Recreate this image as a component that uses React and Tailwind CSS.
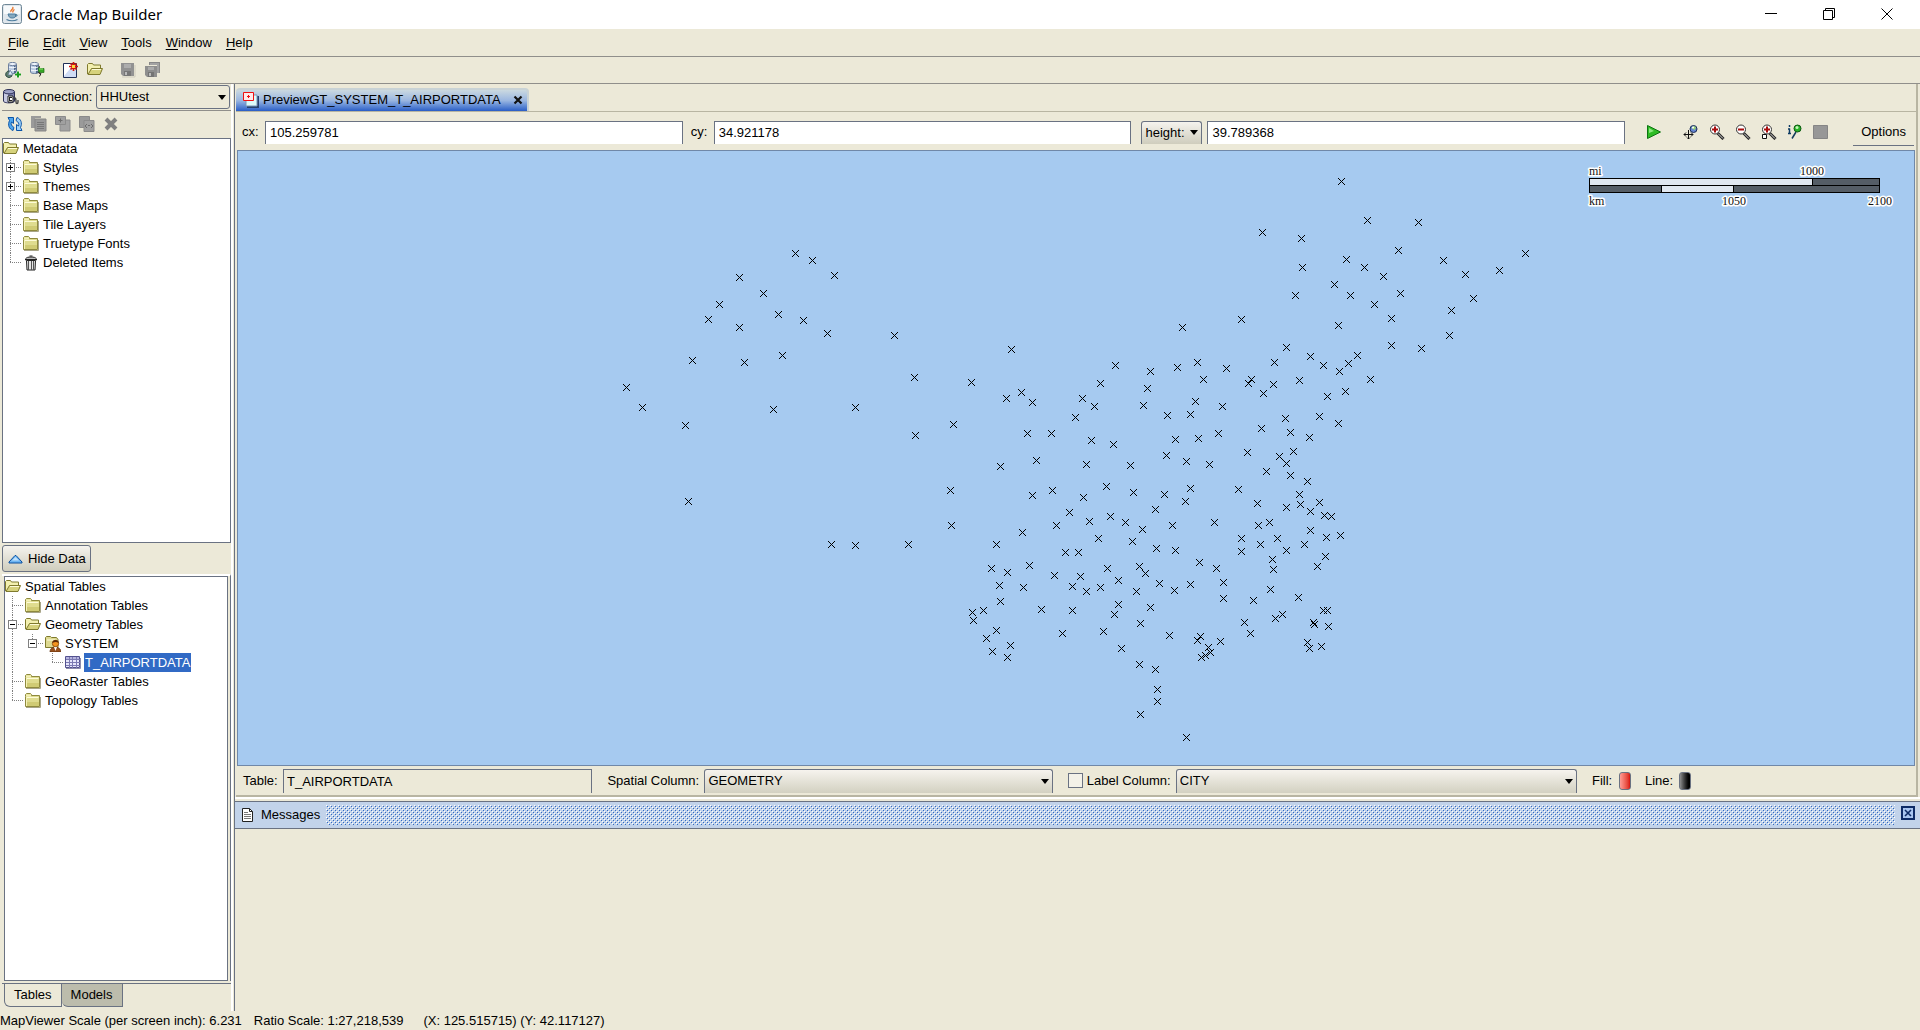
import { useState } from "react";

// airport locations, in window pixels
const AIRPORTS = [
  [795,253],[812,260],[834,275],[739,277],[763,293],[719,304],[708,319],[739,327],[778,314],[803,320],
  [827,333],[894,335],[692,360],[744,362],[782,355],[914,377],[971,382],[626,387],[642,407],[773,409],
  [855,407],[685,425],[915,435],[953,424],[950,490],[688,501],[951,525],[831,544],[855,545],[908,544],
  [1011,349],[1006,398],[1021,392],[1032,402],[1027,433],[1051,433],[1000,466],[1036,460],[1032,495],
  [1052,490],[1022,532],[996,544],[1115,365],[1100,383],[1082,398],[1094,406],[1075,417],
  [1091,440],[1113,444],[1086,464],[1130,465],[1106,486],[1083,497],[1069,512],[1056,525],[1089,521],
  [1110,516],[1125,522],[1098,538],[1065,552],[1078,552],[1029,565],[1133,492],[1150,371],[1147,388],
  [1143,405],[1177,367],[1197,362],[1203,379],[1195,401],[1190,414],[1167,415],[1175,439],[1198,438],
  [1166,455],[1186,461],[1209,464],[1218,433],[1222,406],[1226,368],[1248,383],[1251,379],[1263,393],
  [1273,384],[1274,362],[1286,347],[1299,380],[1310,356],[1323,365],[1339,371],[1348,363],[1357,355],
  [1391,345],[1370,379],[1345,391],[1327,396],[1319,416],[1338,423],[1309,437],[1285,418],
  [1290,432],[1261,428],[1247,452],[1279,456],[1293,451],[1286,463],[1290,475],[1266,471],[1307,481],
  [1299,494],[1300,504],[1286,507],[1310,511],[1319,502],[1324,515],[1331,516],[1310,530],[1326,537],
  [1340,535],[1304,544],[1325,556],[1317,566],[1238,489],[1257,503],[1258,525],[1269,522],[1277,538],
  [1286,550],[1260,544],[1241,538],[1241,551],[1272,559],[1273,569],[1214,522],[1190,488],[1185,501],
  [1164,494],[1155,509],[1142,529],[1132,541],[1172,525],[1156,548],[1175,550],[1199,562],[1216,568],
  [991,568],[1007,572],[999,585],[1023,587],[1000,601],[972,612],[983,610],[973,620],[986,638],[996,630],
  [992,651],[1010,645],[1007,657],[1041,609],[1054,575],[1072,586],[1080,576],[1086,591],[1072,610],
  [1062,633],[1100,587],[1107,568],[1118,580],[1118,604],[1114,614],[1103,631],[1121,648],[1139,566],
  [1145,573],[1136,591],[1150,607],[1140,623],[1159,583],[1174,590],[1190,584],[1223,582],[1223,598],
  [1169,635],[1139,664],[1155,669],[1157,689],[1157,701],[1140,714],[1186,737],[1200,636],[1197,640],
  [1208,647],[1210,652],[1205,655],[1201,657],[1220,641],[1244,622],[1250,633],[1253,600],[1270,589],
  [1275,618],[1282,614],[1298,597],[1313,622],[1314,624],[1323,610],[1327,610],[1328,626],[1307,642],
  [1309,648],[1321,646],[1341,181],[1367,220],[1418,222],[1262,232],[1301,238],[1398,250],
  [1346,259],[1364,267],[1302,267],[1383,276],[1334,284],[1350,295],[1295,295],[1400,293],[1443,260],
  [1465,274],[1499,270],[1525,253],[1473,298],[1451,310],[1374,304],[1391,318],[1338,325],[1241,319],
  [1182,327],[1449,335],[1421,348],
];

function Icon({ children, size = 16, className = "" }) {
  return (
    <svg width={size} height={size} viewBox={`0 0 ${size} ${size}`} className={`shrink-0 ${className}`} aria-hidden="true">
      {children}
    </svg>
  );
}

const JavaIcon = () => (
  <Icon size={20}>
    <rect x=".5" y=".5" width="19" height="19" rx="2" fill="#dfe6ec" stroke="#6f8797" />
    <rect x="2" y="2" width="16" height="8" fill="#f6f9fb" />
    <path d="M10.500 3c2 2-3 3-1.500 5M12.500 5.500c-2 1-2 1.700-1.500 3" stroke="#e8762d" strokeWidth="1.300" fill="none" />
    <path d="M6 10h7.500v2.500c-1 2-5.500 2-6.500 0zM13.500 10.500c2.500-.5 2 2-.5 2.200" stroke="#4a7a9c" fill="#86a9c0" />
    <path d="M4.500 15.500c3 1.500 8 1.500 11 0" stroke="#4a7a9c" strokeWidth="1.300" fill="none" />
  </Icon>
);

const Cylinder = ({ x = 0, y = 0 }) => (
  <g transform={`translate(${x} ${y})`}>
    <path d="M.5 2v8c0 2 8 2 8 0V2" fill="#b9cbe2" stroke="#6d7f9c" />
    <path d="M6 3v8.500c2-.3 2.500-.8 2.500-1.500V2z" fill="#51698c" />
    <ellipse cx="4.500" cy="2" rx="4" ry="1.600" fill="#eef4fb" stroke="#6d7f9c" />
    <path d="M1 5c1.500 1 5 1 7 0M1 8c1.500 1 5 1 7 0" stroke="#fff" fill="none" />
  </g>
);

const AddDbIcon = () => (
  <Icon>
    <Cylinder x={3} />
    <path d="M1 14c-1-3 1-5 3-5l3 5-3 2z" fill="#5f7f6b" stroke="#2d4a46" />
    <path d="M5 8l-2 5h5z" fill="#dbe8f5" stroke="#5a728e" strokeWidth=".7" />
    <path d="M13 9.500v6M10 12.500h6" stroke="#fff" strokeWidth="3" />
    <path d="M13 9.500v6M10 12.500h6" stroke="#1c9a1c" strokeWidth="2" />
  </Icon>
);

const DbFlagIcon = () => (
  <Icon>
    <Cylinder x={0} />
    <path d="M9.500 4v8" stroke="#6d5c48" />
    <path d="M8 10.500l3 1-1.500 3" stroke="#222" fill="none" />
    <path d="M8.500 5.500l2 1h3.500v4h-3.500l-2-1z" fill="#37a826" stroke="#1d6d16" strokeWidth=".7" />
    <path d="M9 7h4" stroke="#8be070" />
  </Icon>
);

const NewDocIcon = () => (
  <Icon>
    <path d="M.5 1.500h13v14H.5z" fill="#cfdcf4" stroke="#1f2f57" />
    <path d="M1 2h10L1 14z" fill="#fff" />
    <path d="M10.500 0v9M6 4.500h9M7.500 1.500l6 6M13.500 1.500l-6 6" stroke="#d4150c" strokeWidth="1.700" />
    <rect x="9" y="3" width="3" height="3" fill="#ffd83a" />
  </Icon>
);

const FolderIcon = () => (
  <Icon>
    <path d="M1 14.500h14.500V4" stroke="#a8a588" fill="none" />
    <path d="M.5 3.500v-2l1-1h4l1 1v1h8v11H.5z" fill="#dfdc8f" stroke="#8f8a3e" />
    <path d="M1.500 4.500h12" stroke="#fdfbd8" />
    <path d="M1.500 4v9" stroke="#f5f2b8" />
    <path d="M1 1.500h5v2H1z" fill="#f3f0b4" />
    <path d="M2 9h12v4H2z" fill="#d0cb74" />
  </Icon>
);

const OpenFolderIcon = () => (
  <Icon>
    <path d="M.5 12V2.500l1-1h4l1 1.500h7v3" fill="#f3f0b0" stroke="#7f7a2e" />
    <path d="M1 12.500l3.500-6h11l-2.500 6z" fill="#d6d27c" stroke="#7f7a2e" />
    <path d="M5 7.500h9" stroke="#fdfbd8" />
  </Icon>
);

const SaveIcon = () => (
  <Icon>
    <path d="M2 15h13V3" stroke="#cfccbd" fill="none" />
    <path d="M1 1h13v13H3l-2-2z" fill="#929292" />
    <path d="M4 2h7v4H4z" fill="#adadad" />
    <path d="M4 9h7v5H4z" fill="#777" />
    <path d="M5 10h2v3H5z" fill="#bbb" />
  </Icon>
);

const SaveAllIcon = () => (
  <Icon>
    <path d="M4 0h11v11h-2V3H4z" fill="#888" />
    <path d="M5 1h9v10h-2V3H5z" fill="#a3a3a3" />
    <path d="M0 4h12v11H2l-2-2z" fill="#8e8e8e" />
    <path d="M3 5h6v3H3z" fill="#ababab" />
    <path d="M3 10h6v5H3z" fill="#747474" />
    <path d="M4 11h2v3H4z" fill="#bbb" />
  </Icon>
);

const PlugDbIcon = () => (
  <Icon>
    <path d="M.5 3v9c0 2.500 11 2.500 11 0V3" fill="#7d81ad" stroke="#2e3157" />
    <path d="M1 3v9c1 1 2 1.300 4 1.500V4z" fill="#c8cbe3" />
    <ellipse cx="6" cy="2.700" rx="5.500" ry="2.200" fill="#9da1c6" stroke="#2e3157" />
    <path d="M5 7h5v6H5z" fill="#fff" stroke="#222" />
    <path d="M6 8.500h3M6 11.500h3M6.500 8v4" stroke="#222" />
    <path d="M10 10c3-3 3 1 3 3s2 2 2 0v-2" stroke="#444" strokeWidth="1.400" fill="none" />
  </Icon>
);

const RefreshIcon = () => (
  <Icon>
    <path d="M1 1.500h5.500v6l-2-1.500c-1 2 0 4 2.500 5.500l-1 3C2 13 .5 9 2.500 4.500z" fill="#4ea6ee" stroke="#0c55a8" />
    <path d="M15 14.500H9.500v-6l2 1.500c1-2 0-4-2.500-5.500l1-3C14 3 15.500 7 13.500 11.500z" fill="#9dd0f8" stroke="#0c55a8" />
  </Icon>
);

const CopyIcon = () => (
  <Icon>
    <path d="M0 0h10v2H4v10H0z" fill="#9a9a9a" />
    <path d="M4 3h11v12H4z" fill="#999" stroke="#858585" />
    <path d="M6 6.500h7M6 8.500h7M6 10.500h7M6 12.500h7" stroke="#777" />
  </Icon>
);

const PreviewGrayIcon = () => (
  <Icon>
    <path d="M5 4h10v11H5z" fill="#a2a2a2" stroke="#8b8b8b" />
    <path d="M.5.500h10v8H.5z" fill="#a0a0a0" stroke="#8b8b8b" />
    <path d="M5.500 2.500v4M3.500 4.500h4" stroke="#6c6c6c" />
  </Icon>
);

const XmlGrayIcon = () => (
  <Icon>
    <path d="M.5.500h10v11H.5z" fill="#9a9a9a" stroke="#8b8b8b" />
    <path d="M5 4.500h10v11H5z" fill="#a0a0a0" stroke="#8b8b8b" />
    <path d="M8 8l-2 2 2 2M12 8l2 2-2 2" stroke="#6c6c6c" fill="none" />
    <path d="M9 9.500h2" stroke="#6c6c6c" />
  </Icon>
);

const DeleteIcon = () => (
  <Icon>
    <path d="M3 3l10 10M13 3L3 13" stroke="#808080" strokeWidth="4" />
  </Icon>
);

const TrashIcon = () => (
  <Icon>
    <path d="M2 4.500h12" stroke="#222" strokeWidth="1.500" />
    <path d="M3 3.500c0-2 10-2 10 0" stroke="#222" fill="#bbb" />
    <path d="M6.500 1h3" stroke="#222" />
    <path d="M3.500 5.500h9l-.5 9.500H4z" fill="#e5e5e5" stroke="#222" />
    <path d="M5.500 6v9M8.500 6v9M10.500 6v9" stroke="#555" />
  </Icon>
);

const SchemaIcon = () => (
  <Icon>
    <path d="M.5 11.500V1.500l1-1h4l1 1h5l1.500 2v8z" fill="#ddd991" stroke="#7f7a2e" />
    <path d="M2 4h9" stroke="#fffde0" />
    <path d="M5 16c0-4 3-5 5-5s6 1 6 5z" fill="#96501d" stroke="#5b2b0a" strokeWidth=".7" />
    <path d="M9 11l1.500 4 1.500-4z" fill="#fff" />
    <circle cx="10.500" cy="7.500" r="3.200" fill="#f3941f" stroke="#7a3c07" strokeWidth=".7" />
    <path d="M7.300 7c0-4 6.400-4 6.400 0-2-1.500-4-1.500-6.400 0z" fill="#5b2b0a" />
  </Icon>
);

const TableIcon = () => (
  <Icon>
    <path d="M.5 1.500h14v11H.5z" fill="#e6e6fa" stroke="#53518f" />
    <path d="M1 2h13v2H1z" fill="#b5b3de" />
    <g shapeRendering="crispEdges">
      <path d="M.5 4.500h14M.5 7.500h14M.5 10.500h14M4.500 2v11M7.500 2v11M11.500 2v11" stroke="#7c7ab2" />
    </g>
    <path d="M1 13.500h14.500V3" stroke="#8d8cab" fill="none" />
  </Icon>
);

const UpIcon = () => (
  <Icon>
    <path d="M1 11L7 4.500h1L14 11v1H1z" fill="#6db5f3" stroke="#0b4f9e" />
    <path d="M4 9.500L7.500 6 11 9.500z" fill="#c3e2fb" />
  </Icon>
);

const PreviewIcon = () => (
  <Icon>
    <path d="M4 15h11V4" stroke="#26406c" strokeWidth="2" fill="none" />
    <path d="M3 3h11v11H3z" fill="#ddfafa" stroke="#7895b8" />
    <path d="M.5.500h10v8H.5z" fill="#ffe9ea" stroke="#f01010" />
    <path d="M5.500 3v3M4 4.500h3" stroke="#f01010" />
  </Icon>
);

const PlayIcon = () => (
  <Icon>
    <path d="M1.500 1.500L14.500 8 1.500 14.500z" fill="#2fbc25" stroke="#0d7411" />
    <path d="M3 4v5l5-2z" fill="#8ce780" />
  </Icon>
);

const PanIcon = () => (
  <Icon>
    <path d="M5.500 6v9M1 10.500h9M3 8.500l-2 2 2 2M8 8.500l2 2-2 2M4 13.500L5.500 15 7 13.500" stroke="#111" fill="none" />
    <circle cx="10.500" cy="5" r="3.500" fill="#6484d0" stroke="#1c2d57" />
    <path d="M8.500 4l2-2 2.500 1-1 3-2-1z" fill="#9bd36f" />
    <circle cx="10" cy="3.500" r="1" fill="#fff" />
  </Icon>
);

const Magnifier = ({ children }) => (
  <Icon>
    <path d="M8.500 9l6 6" stroke="#222" strokeWidth="3" />
    <path d="M9 9.500l5 5" stroke="#ddd" />
    <circle cx="6" cy="5.500" r="4.500" fill="#fff" stroke="#333" />
    {children}
  </Icon>
);

const MarqueeIcon = () => (
  <Magnifier>
    <path d="M6 2.500v6M3 5.500h6" stroke="#a80d0d" strokeWidth="2" />
    <path d="M1.500 10.500h4v4h-4z" fill="#fff" stroke="#111" />
  </Magnifier>
);

const IdentifyIcon = () => (
  <Icon>
    <path d="M2.500 1v2M2.500 4.500v5M1 5h2M1 9.500h3" stroke="#0d3b63" strokeWidth="1.500" />
    <path d="M9 8l-4 6.500" stroke="#143b5c" strokeWidth="1.500" />
    <circle cx="10.500" cy="4.500" r="3.500" fill="#27b227" stroke="#0b570f" />
    <circle cx="10" cy="3.500" r="1.500" fill="#c4f6b7" />
  </Icon>
);

const MessagesIcon = () => (
  <Icon>
    <path d="M2.500 1.500h7l3 3v10h-10z" fill="#fff" stroke="#222" />
    <path d="M9.500 1.500v3h3" stroke="#222" fill="none" />
    <path d="M4 5.500h4M4 7.500h7M4 9.500h7M4 11.500h7" stroke="#777" />
  </Icon>
);

const CloseTabIcon = () => (
  <Icon size={10}>
    <path d="M1.500 1.500l7 7M8.500 1.500l-7 7" stroke="#111" strokeWidth="2.200" />
  </Icon>
);

// 20px wide piece of the dotted tree lines
function Guide({ kind }) {
  const box = kind === "plus" || kind === "minus" || kind === "minusEnd";
  const end = kind === "end" || kind === "minusEnd";
  return (
    <svg width="20" height="19" className="shrink-0" shapeRendering="crispEdges" aria-hidden="true">
      {kind !== "blank" && <path d={end ? "M7.500 0V10" : "M7.500 0V19"} stroke="#808080" strokeDasharray="1 1" />}
      {kind !== "blank" && kind !== "line" && <path d="M7 9.500h12" stroke="#808080" strokeDasharray="1 1" />}
      {box && <rect x="3.500" y="5.500" width="8" height="8" fill="#fff" stroke="#808080" />}
      {box && <path d="M5 9.500h5" stroke="#000" />}
      {kind === "plus" && <path d="M7.500 7v5" stroke="#000" />}
    </svg>
  );
}

function TreeRow({ guides = [], icon, label, selected }) {
  return (
    <li className="flex h-[19px] items-center">
      {guides.map((kind, i) => <Guide key={i} kind={kind} />)}
      {icon}
      <span className={selected ? "ml-[3px] h-[19px] bg-[#316ac5] px-px leading-[19px] text-white" : "ml-1"}>{label}</span>
    </li>
  );
}

function Combo({ id, value, options, className, selectClass }) {
  return (
    <div className={`relative min-w-0 ${className}`}>
      <select id={id} aria-label={value} defaultValue={value} className={`h-full w-full appearance-none border-gray-500 outline-none ${selectClass}`}>
        {options.map((o) => <option key={o}>{o}</option>)}
      </select>
      <svg width="8" height="5" className="pointer-events-none absolute top-1/2 right-1 -mt-0.5" aria-hidden="true">
        <path d="M0 0h8L4 5z" />
      </svg>
    </div>
  );
}

function ToolButton({ label, children, className = "" }) {
  return <button aria-label={label} className={`shrink-0 ${className}`}>{children}</button>;
}

function TitleBar() {
  return (
    <header className="flex h-[29px] shrink-0 items-center bg-white pb-0.5 pl-0.5">
      <JavaIcon />
      <h1 className="ml-[5px] flex-1 font-['Noto_Sans',sans-serif] text-[15px] font-normal text-black">Oracle Map Builder</h1>
      <div className="flex items-center gap-[46px] pr-[27px]">
        <ToolButton label="Minimize"><Icon size={12}><path d="M0 5.500h12" stroke="#000" /></Icon></ToolButton>
        <ToolButton label="Restore"><Icon size={12}><path d="M.5 2.500h9v9h-9zM2.500 2.500v-2h9v9h-2" stroke="#000" fill="none" /></Icon></ToolButton>
        <ToolButton label="Close"><Icon size={12}><path d="M.5.500l11 11M11.500.500l-11 11" stroke="#000" /></Icon></ToolButton>
      </div>
    </header>
  );
}

function MenuBar() {
  const menus = ["File", "Edit", "View", "Tools", "Window", "Help"];
  return (
    <nav className="flex h-[28px] shrink-0 items-center gap-[14px] border-b border-[#908f8b] pl-2">
      {menus.map((m) => (
        <button key={m}><span className="underline underline-offset-2">{m[0]}</span>{m.slice(1)}</button>
      ))}
    </nav>
  );
}

function MainToolbar() {
  return (
    <div className="flex h-[27px] shrink-0 items-center border-b border-[#908f8b] pl-[5px]">
      <ToolButton label="New connection"><AddDbIcon /></ToolButton>
      <ToolButton label="Connect" className="ml-[9px]"><DbFlagIcon /></ToolButton>
      <ToolButton label="New" className="ml-[17px]"><NewDocIcon /></ToolButton>
      <ToolButton label="Open" className="ml-2"><OpenFolderIcon /></ToolButton>
      <ToolButton label="Save" className="ml-[17px]"><SaveIcon /></ToolButton>
      <ToolButton label="Save all" className="ml-[9px]"><SaveAllIcon /></ToolButton>
    </div>
  );
}

function Sidebar() {
  const [showData, setShowData] = useState(true);
  return (
    <aside className="flex w-[231px] shrink-0 flex-col pl-0.5">
      <div className="flex h-[27px] shrink-0 items-center border-b border-[#908f8b] pr-px pl-px">
        <PlugDbIcon />
        <label htmlFor="connection" className="ml-1 flex-1">Connection:</label>
        <Combo id="connection" value="HHUtest" options={["HHUtest"]} className="h-6 w-[134px]" selectClass="rounded-[3px] border pl-[3px]" />
      </div>
      <div className="flex h-[27px] shrink-0 items-center gap-2 pb-0.5 pl-[5px]">
        <ToolButton label="Refresh"><RefreshIcon /></ToolButton>
        <ToolButton label="Copy"><CopyIcon /></ToolButton>
        <ToolButton label="Preview"><PreviewGrayIcon /></ToolButton>
        <ToolButton label="View XML"><XmlGrayIcon /></ToolButton>
        <ToolButton label="Delete"><DeleteIcon /></ToolButton>
      </div>
      <ul className="min-h-0 flex-[200] overflow-hidden border border-gray-500 bg-white">
        <TreeRow icon={<OpenFolderIcon />} label="Metadata" />
        <TreeRow guides={["plus"]} icon={<FolderIcon />} label="Styles" />
        <TreeRow guides={["plus"]} icon={<FolderIcon />} label="Themes" />
        <TreeRow guides={["tee"]} icon={<FolderIcon />} label="Base Maps" />
        <TreeRow guides={["tee"]} icon={<FolderIcon />} label="Tile Layers" />
        <TreeRow guides={["tee"]} icon={<FolderIcon />} label="Truetype Fonts" />
        <TreeRow guides={["end"]} icon={<TrashIcon />} label="Deleted Items" />
      </ul>
      <div className="flex h-[31px] shrink-0 items-start pt-0.5">
        <button onClick={() => setShowData(!showData)} className="flex h-[27px] items-center gap-1 rounded-[3px] border border-gray-500 bg-linear-to-b from-[#f5f3ee] to-[#cfcdbd] pr-1 pl-[5px]">
          <UpIcon />
          <span>Hide Data</span>
        </button>
      </div>
      {showData && (
        <div className="flex min-h-0 flex-[201] flex-col border-t-2 border-r border-white border-r-gray-500 pl-0.5">
          <ul className="mr-0.5 min-h-0 flex-1 overflow-hidden border border-gray-500 bg-white">
            <TreeRow icon={<OpenFolderIcon />} label="Spatial Tables" />
            <TreeRow guides={["tee"]} icon={<FolderIcon />} label="Annotation Tables" />
            <TreeRow guides={["minus"]} icon={<OpenFolderIcon />} label="Geometry Tables" />
            <TreeRow guides={["line", "minusEnd"]} icon={<SchemaIcon />} label="SYSTEM" />
            <TreeRow guides={["line", "blank", "end"]} icon={<TableIcon />} label="T_AIRPORTDATA" selected />
            <TreeRow guides={["tee"]} icon={<FolderIcon />} label="GeoRaster Tables" />
            <TreeRow guides={["end"]} icon={<FolderIcon />} label="Topology Tables" />
          </ul>
        </div>
      )}
      <div className="mt-0.5 flex h-7 shrink-0 border-t border-gray-500 pl-0.5">
        <button className="h-[23px] rounded-bl-md border border-t-0 border-gray-500 px-[9px]">Tables</button>
        <button className="h-[23px] rounded-bl-md border border-t-0 border-l-0 border-gray-500 bg-[#bcbcac] px-[9px]">Models</button>
      </div>
    </aside>
  );
}

function ScaleBar() {
  return (
    <svg width="318" height="50" className="absolute top-3 right-[9px]" fontFamily="'Liberation Serif', serif" fontSize="12" role="img" aria-label="Scale bar">
      <g shapeRendering="crispEdges" stroke="#000">
        <path d="M2.500 15.500h223v7h-223z" fill="#e0e7f0" />
        <path d="M225.500 15.500h67v7h-67z" fill="#555d66" />
        <path d="M2.500 22.500h290v7h-290z" fill="#555d66" />
        <path d="M74.500 22.500h72v7h-72z" fill="#e0e7f0" />
      </g>
      <g fill="#111" stroke="#fff" strokeWidth="3" strokeLinejoin="round" paintOrder="stroke">
        <text x="2" y="12">mi</text>
        <text x="225" y="12" textAnchor="middle">1000</text>
        <text x="2" y="42">km</text>
        <text x="147" y="42" textAnchor="middle">1050</text>
        <text x="293" y="42" textAnchor="middle">2100</text>
      </g>
    </svg>
  );
}

function MapCanvas() {
  return (
    <div className="relative mr-px ml-px min-h-0 flex-1 overflow-hidden border border-[#7088a8] bg-[#a6caf0]">
      <svg className="block h-full w-full" role="img" aria-label="Airports">
        <g transform="translate(-238 -151)" stroke="#000" fill="none">
          {AIRPORTS.map(([x, y]) => (
            <path key={`${x}-${y}`} d={`M${x - 3} ${y - 3}l7 7M${x + 4} ${y - 3}l-7 7`} />
          ))}
        </g>
      </svg>
      <ScaleBar />
    </div>
  );
}

function CoordinateBar() {
  const field = "h-[23px] min-w-0 flex-1 border border-b-0 border-gray-500 bg-white px-1 outline-none";
  return (
    <div className="flex h-[38px] shrink-0 items-center pt-0.5 pl-1.5">
      <label htmlFor="cx" className="w-[23px]">cx:</label>
      <input id="cx" defaultValue="105.259781" className={field} />
      <label htmlFor="cy" className="ml-2 w-[23px]">cy:</label>
      <input id="cy" defaultValue="34.921178" className={field} />
      <Combo id="extent" value="height:" options={["height:", "width:"]} className="ml-2.5 h-[23px] w-[61px]" selectClass="rounded-t-[3px] border border-b-0 bg-linear-to-b from-[#f5f3ee] to-[#cfcdbd] pl-[3px]" />
      <input aria-label="height" defaultValue="39.789368" className={`ml-[5px] ${field}`} />
      <ToolButton label="Run" className="ml-[21px]"><PlayIcon /></ToolButton>
      <div className="ml-[21px] flex gap-[10px]">
        <ToolButton label="Pan"><PanIcon /></ToolButton>
        <ToolButton label="Zoom in"><Magnifier><path d="M6 2.500v6M3 5.500h6" stroke="#a80d0d" strokeWidth="2" /></Magnifier></ToolButton>
        <ToolButton label="Zoom out"><Magnifier><path d="M3 5.500h6" stroke="#a80d0d" strokeWidth="2" /></Magnifier></ToolButton>
        <ToolButton label="Marquee zoom"><MarqueeIcon /></ToolButton>
        <ToolButton label="Identify"><IdentifyIcon /></ToolButton>
        <ToolButton label="Stop"><Icon><path d="M.5 1.500h14v13H.5z" fill="#979797" stroke="#858585" /></Icon></ToolButton>
      </div>
      <button className="mr-0.5 ml-6 h-7 border-b border-gray-500 px-2">Options</button>
    </div>
  );
}

function LayerBar() {
  const combo = "rounded-t-[3px] border border-b-0 bg-linear-to-b from-[#f6f3ee] to-[#d3d1c1] pl-[3px]";
  return (
    <div className="flex h-[31px] shrink-0 items-center border-b-2 border-[#b8b5a2] pr-[225px] pl-[7px]">
      <label htmlFor="table" className="w-10">Table:</label>
      <input id="table" readOnly defaultValue="T_AIRPORTDATA" className="h-6 min-w-0 flex-[302] border border-b-0 border-gray-500 px-[3px] outline-none" />
      <label htmlFor="spatial" className="ml-[15px] w-[97px]">Spatial Column:</label>
      <Combo id="spatial" value="GEOMETRY" options={["GEOMETRY"]} className="h-6 flex-[349]" selectClass={combo} />
      <input type="checkbox" id="labelled" aria-label="Show labels" className="ml-[15px] size-[15px] appearance-none border border-gray-500 bg-[#f3f1e8]" />
      <label htmlFor="label-column" className="ml-1 w-[89px]">Label Column:</label>
      <Combo id="label-column" value="CITY" options={["CITY"]} className="h-6 flex-[402]" selectClass={combo} />
      <span className="ml-[15px] w-[27px]">Fill:</span>
      <button aria-label="Fill color" className="h-[18px] w-3 rounded-[3px] border border-gray-500 bg-linear-to-r from-[#ff9c96] to-[#d90808]" />
      <span className="ml-[14px] w-[34px]">Line:</span>
      <button aria-label="Line color" className="h-[18px] w-3 rounded-[3px] border border-gray-500 bg-linear-to-r from-[#8f8f8f] to-black" />
    </div>
  );
}

function Messages() {
  return (
    <section className="h-[210px] shrink-0 border-t border-gray-500">
      <div className="flex h-[27px] items-center border-b border-gray-500 bg-[#c2d3ea] pr-[5px] pl-[5px]">
        <MessagesIcon />
        <h2 className="ml-[5px] font-normal">Messages</h2>
        <svg className="ml-1.5 h-5 flex-1" shapeRendering="crispEdges" aria-hidden="true">
          <defs>
            <pattern id="bumps" width="4" height="4" patternUnits="userSpaceOnUse">
              <path d="M0 0h1v1H0zM2 2h1v1H2z" fill="#fff" />
              <path d="M1 1h1v1H1zM3 3h1v1H3z" fill="#316ac5" />
            </pattern>
          </defs>
          <rect width="100%" height="100%" fill="url(#bumps)" />
        </svg>
        <ToolButton label="Close messages" className="mb-1 ml-1.5">
          <Icon size={14}>
            <path d="M1 1h12v12H1z" fill="#a9c6f0" stroke="#0d2b66" strokeWidth="2" />
            <path d="M4 4l6 6M10 4l-6 6" stroke="#0d2b66" strokeWidth="1.600" />
          </Icon>
        </ToolButton>
      </div>
    </section>
  );
}

export default function App() {
  return (
    <div className="flex h-screen flex-col overflow-hidden bg-[#ece9d8] font-['Liberation_Sans',Arial,sans-serif] text-[13px] leading-4 text-black">
      <TitleBar />
      <MenuBar />
      <MainToolbar />
      <div className="flex min-h-0 flex-1">
        <Sidebar />
        <div className="w-1 shrink-0 border-r border-l-2 border-l-white border-r-gray-500" />
        <main className="flex min-w-0 flex-1 flex-col">
          <div className="mr-0.5 flex min-h-0 flex-1 flex-col border-r-2 border-[#b8b5a2] pl-px">
            <div className="flex h-7 shrink-0 items-end border-b border-[#b8b5a2]">
              <div className="flex h-[23px] items-center rounded-t border-t-2 border-r-2 border-[#c9d3d6] bg-linear-to-b from-[#cbd9e0] via-[#9ab6e0] to-[#2a5dc6] pr-1 pb-0.5 pl-[7px]">
                <PreviewIcon />
                <span className="ml-1">PreviewGT_SYSTEM_T_AIRPORTDATA</span>
                <ToolButton label="Close tab" className="ml-3"><CloseTabIcon /></ToolButton>
              </div>
            </div>
            <CoordinateBar />
            <MapCanvas />
            <LayerBar />
          </div>
          <div className="h-1 shrink-0 border-t-2 border-white" />
          <Messages />
        </main>
      </div>
      <footer className="flex h-[19px] shrink-0 items-center whitespace-pre">
        <span>MapViewer Scale (per screen inch): 6.231</span>
        <span className="ml-3">Ratio Scale: 1:27,218,539</span>
        <span className="ml-5">(X: 125.515715) (Y: 42.117127)</span>
      </footer>
    </div>
  );
}
